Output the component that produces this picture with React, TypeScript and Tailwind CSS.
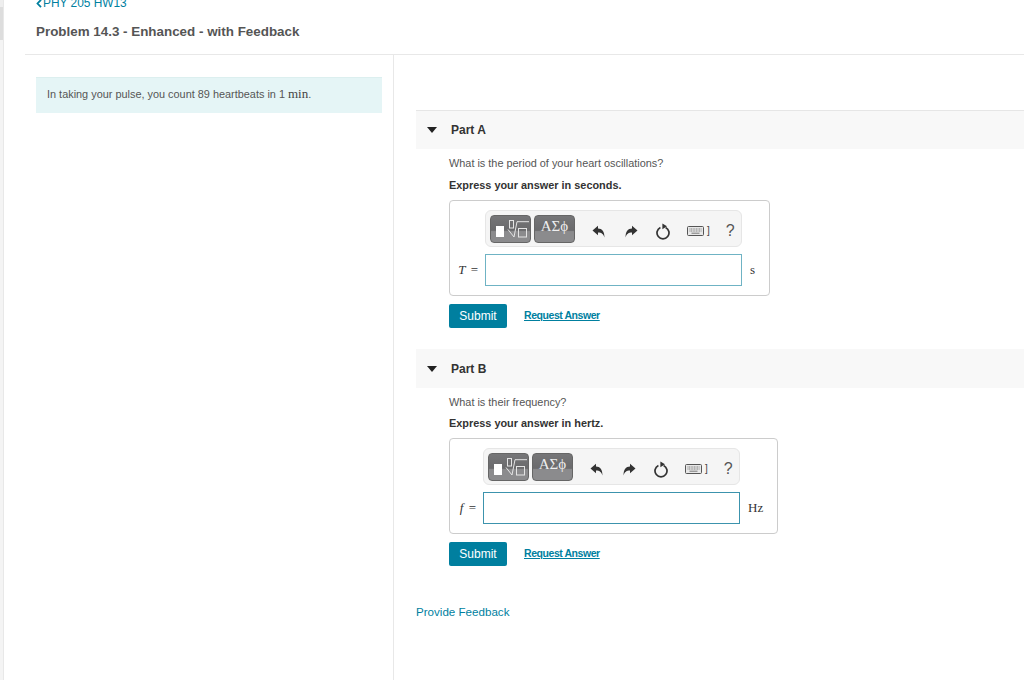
const sans = "font-['Liberation_Sans',Arial,sans-serif]";
const serif = "font-['Liberation_Serif','Times_New_Roman',serif]";

function TemplatesIcon() {
  return (
    <svg width="39" height="26" viewBox="0 0 39 26" className="block">
      <rect x="5" y="10" width="8" height="11" fill="#fff" />
      <rect x="18.5" y="4.5" width="4" height="7.5" fill="none" stroke="#e4e4e4" strokeWidth="1" />
      <path d="M17 13.5 L23 21 L26 5.7 L38 5.7" fill="none" stroke="#e4e4e4" strokeWidth="1" />
      <rect x="27.5" y="12.5" width="8" height="8.5" fill="none" stroke="#e4e4e4" strokeWidth="1" />
    </svg>
  );
}

function UndoIcon({ flip }: { flip?: boolean }) {
  return (
    <svg width="13" height="13" viewBox="0 0 13 13" className={flip ? "block -scale-x-100" : "block"}>
      <path d="M0.5 5.5 L6 0.8 L6 3.6 C10 3.6 12.6 6.4 12.4 12.4 C11.2 9 9.6 7.6 6 7.6 L6 10.2 Z" fill="#333" />
    </svg>
  );
}

function ResetIcon() {
  return (
    <svg width="14" height="17" viewBox="0 0 14 17" className="block">
      <path d="M4.4 4.4 A6 6 0 1 0 9.6 4.4" fill="none" stroke="#333" strokeWidth="1.7" />
      <path d="M6.4 0.4 L11 3.2 L6.4 6.2 Z" fill="#333" />
    </svg>
  );
}

function KeyboardIcon() {
  return (
    <div className="flex items-center gap-[3px]">
      <svg width="17" height="10" viewBox="0 0 17 10" className="block">
        <rect x="0.5" y="0.5" width="16" height="9" rx="1" fill="#e8e8e8" stroke="#555" />
        <path d="M2.5 3 H14.5 M2.5 5 H14.5" stroke="#777" strokeWidth="1" strokeDasharray="1 0.6" />
        <path d="M4.5 7.2 H12.5" stroke="#777" strokeWidth="1" />
      </svg>
      <span className={`${sans} text-[10px] leading-none text-[#444]`}>]</span>
    </div>
  );
}

function ToolBtn({ children }: { children: React.ReactNode }) {
  return (
    <div className="w-[41px] h-[28px] rounded-[4px] border border-[#666] flex items-center justify-center bg-[linear-gradient(#767678_0,#6a6a6c_55%,#8b8b8d_60%,#8b8b8d_100%)]">
      {children}
    </div>
  );
}

function AnswerBox({ label, unit, boxW, inputBorder, pl }: { label: React.ReactNode; unit: string; boxW: string; inputBorder: string; pl: string }) {
  return (
    <div className={`${boxW} border border-[#ccc] rounded-[4px] ${pl} pt-[9px] pb-[9px] bg-white`}>
      <div className="w-[257px] h-[37px] bg-[#f5f5f5] border border-[#e6e6e6] rounded-[6px] flex items-center pl-[4px]">
        <div className="flex gap-[3px]">
          <ToolBtn><TemplatesIcon /></ToolBtn>
          <ToolBtn><span className={`${serif} text-[15px] leading-none text-[#eee] -mt-[5px]`}>ΑΣϕ</span></ToolBtn>
        </div>
        <div className="ml-[17px] mt-[5px] flex items-center">
          <UndoIcon />
          <div className="w-[20px]" />
          <UndoIcon flip />
          <div className="w-[18px]" />
          <ResetIcon />
          <div className="w-[17px]" />
          <KeyboardIcon />
          <span className={`${sans} text-[16px] leading-none text-[#555] ml-[16px]`}>?</span>
        </div>
      </div>
      <div className="flex items-center mt-[7px] relative">
        <div className={`absolute right-full pr-[7px] whitespace-nowrap ${serif} text-[13px] text-[#333]`}>{label}</div>
        <div className={`w-[257px] h-[32px] border ${inputBorder} bg-white`} />
        <div className={`${serif} text-[13px] text-[#333] ml-[8px]`}>{unit}</div>
      </div>
    </div>
  );
}

function Part({ title, question, instruction, bordered, tight, children }: { title: string; question: string; instruction: string; bordered?: boolean; tight?: boolean; children: React.ReactNode }) {
  return (
    <section>
      <div className={`h-[39px] bg-[#f8f8f8] flex items-center pl-[11px] ${bordered ? "border-t border-[#e6e6e6]" : ""}`}>
        <svg width="10" height="6" viewBox="0 0 10 6" className="block"><path d="M0 0 H10 L5 6 Z" fill="#222" /></svg>
        <span className="ml-[14px] text-[12px] font-bold text-[#333]">{title}</span>
      </div>
      <div className="pl-[33px]">
        <p className="mt-[6px] h-[16px] text-[10.9px] leading-[16px] text-[#555]">{question}</p>
        <p className={`${tight ? "mt-[5px]" : "mt-[6px]"} h-[16px] text-[10.9px] leading-[16px] font-bold text-[#333]`}>{instruction}</p>
        <div className="mt-[7px]">{children}</div>
        <div className="mt-[8px] flex items-center">
          <div className="w-[58px] h-[24px] bg-[#007f9f] rounded-[2px] text-white text-[12px] flex items-center justify-center">Submit</div>
          <a className="ml-[17px] text-[10.5px] tracking-[-0.44px] font-bold text-[#007f9f] underline">Request Answer</a>
        </div>
      </div>
    </section>
  );
}

export default function App() {
  return (
    <div className={`w-[1024px] h-[680px] overflow-hidden bg-white flex ${sans}`}>
      {/* left edge of the page */}
      <div className="w-[4px] shrink-0 border-r border-[#e8e8e8] bg-[#f4f4f4]">
        <div className="h-[7px] bg-[#eeeeee]" />
        <div className="h-[33px] bg-[#dddddd]" />
      </div>
      <div className="ml-[21px] flex-1 flex flex-col min-w-0">
        <header className="h-[55px] shrink-0 border-b border-[#e8e8e8] pl-[11px]">
          <div className="-mt-[4px] h-[14px] flex items-center text-[11.9px] leading-[14px] text-[#007f9f]">
            <svg width="6" height="9" viewBox="0 0 6 9" className="block mr-[1px]"><path d="M5 0.8 L1.5 4.5 L5 8.2" fill="none" stroke="#007f9f" strokeWidth="1.8" /></svg>
            PHY 205 HW13
          </div>
          <h1 className="mt-[12px] text-[13.4px] leading-[20px] font-bold text-[#555]">Problem 14.3 - Enhanced - with Feedback</h1>
        </header>
        <div className="flex flex-1 min-h-0">
          <div className="w-[369px] shrink-0 border-r border-[#e8e8e8] pl-[11px] pr-[11px] pt-[22px]">
            <div className="h-[36px] bg-[#e5f5f6] border-t border-[#dcefef] pl-[11px] pb-[3px] flex items-center text-[10.9px] text-[#555]">
              <span>In taking your pulse, you count 89 heartbeats in 1 <span className={`${serif} text-[13px] text-[#444]`}>min</span>.</span>
            </div>
          </div>
          <main className="flex-1 pl-[22px] pt-[55px] min-w-0">
            <Part bordered title="Part A" question="What is the period of your heart oscillations?" instruction="Express your answer in seconds.">
              <AnswerBox
                boxW="w-[321px]"
                pl="pl-[35px]"
                inputBorder="border-[#6fb3c4]"
                unit="s"
                label={<><i className="mr-[2px]">T</i> =</>}
              />
            </Part>
            <div className="mt-[21px]">
              <Part tight title="Part B" question="What is their frequency?" instruction="Express your answer in hertz.">
                <AnswerBox
                  boxW="w-[329px]"
                  pl="pl-[33px]"
                  inputBorder="border-[#3c93ad]"
                  unit="Hz"
                  label={<><i className="mr-[2px]">f</i> =</>}
                />
              </Part>
            </div>
            <a className="block mt-[38px] text-[11.6px] leading-[16px] text-[#007f9f]">Provide Feedback</a>
          </main>
        </div>
      </div>
    </div>
  );
}
